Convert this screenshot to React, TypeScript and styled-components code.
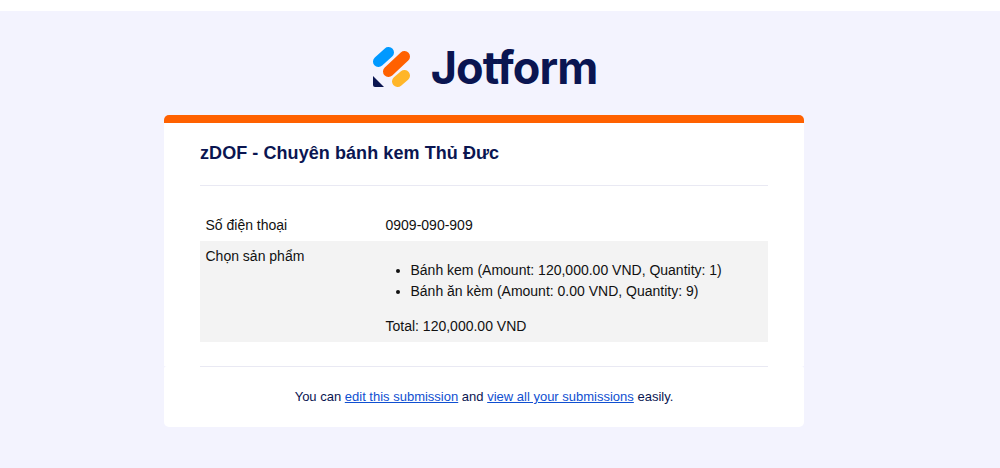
import React from 'react';
import styled, { createGlobalStyle } from 'styled-components';

const GlobalStyle = createGlobalStyle`
  html, body {
    margin: 0;
    padding: 0;
    background: #ffffff;
    font-family: "Liberation Sans", Arial, sans-serif;
  }
`;

const App: React.FC = () => {
  return (
    <>
      <GlobalStyle />
      <Page>
        <LogoRow>
          <LogoMark viewBox="0 0 38 40" aria-hidden="true">
            <line x1="5.5" y1="14.5" x2="15.5" y2="5.5" stroke="#0099ff" strokeWidth="11" strokeLinecap="round" />
            <line x1="15.5" y1="24.5" x2="31.5" y2="9.5" stroke="#ff6100" strokeWidth="11" strokeLinecap="round" />
            <line x1="24.5" y1="34.5" x2="31.5" y2="28.5" stroke="#ffb629" strokeWidth="11" strokeLinecap="round" />
            <path d="M0 29 L11 40 H2 A2 2 0 0 1 0 38 Z" fill="#0a1551" />
          </LogoMark>
          <Wordmark>Jotform</Wordmark>
        </LogoRow>
        <Card>
          <CardBody>
            <Header>
              <Title>zDOF - Chuyên bánh kem Thủ Đưc</Title>
            </Header>
            <Table>
              <Row>
                <Label>Số điện thoại</Label>
                <Value>0909-090-909</Value>
              </Row>
              <Row $shaded>
                <Label>Chọn sản phẩm</Label>
                <Value>
                  <Items>
                    <li>Bánh kem (Amount: 120,000.00 VND, Quantity: 1)</li>
                    <li>Bánh ăn kèm (Amount: 0.00 VND, Quantity: 9)</li>
                  </Items>
                  <Total>Total: 120,000.00 VND</Total>
                </Value>
              </Row>
            </Table>
          </CardBody>
          <Footer>
            <FooterText>
              You can <a href="#edit">edit this submission</a> and{' '}
              <a href="#all">view all your submissions</a> easily.
            </FooterText>
          </Footer>
        </Card>
      </Page>
    </>
  );
};

export default App;

const Page = styled.div`
  margin-top: 11px;
  height: 457px;
  box-sizing: border-box;
  padding-right: 32px;
  background: #f3f3fe;
  display: flex;
  flex-direction: column;
  align-items: center;
  overflow: hidden;
`;

const LogoRow = styled.div`
  height: 104px;
  display: flex;
  align-items: flex-start;
  gap: 20px;
  padding-top: 36px;
  padding-left: 2px;
  box-sizing: border-box;
`;

const LogoMark = styled.svg`
  width: 38px;
  height: 40px;
  display: block;
`;

const Wordmark = styled.span`
  font-family: Inter, "Liberation Sans", sans-serif;
  font-size: 45px;
  font-weight: 700;
  letter-spacing: -0.95px;
  line-height: 42px;
  color: #0a1551;
`;

const Card = styled.div`
  width: 640px;
  height: 312px;
  border-top: 8px solid #ff6100;
  border-radius: 5px;
  box-sizing: border-box;
`;

const CardBody = styled.div`
  background: #ffffff;
  padding: 0 36px;
  height: 243px;
  box-sizing: border-box;
`;

const Header = styled.div`
  height: 62px;
  border-bottom: 1px solid #e9e9f3;
  display: flex;
  align-items: center;
`;

const Title = styled.h1`
  margin: 0 0 2px;
  font-size: 18px;
  font-weight: 700;
  letter-spacing: 0.07px;
  color: #0a1551;
`;

const Table = styled.div`
  padding-top: 24px;
`;

const Row = styled.div<{ $shaded?: boolean }>`
  display: grid;
  grid-template-columns: 185.5px 1fr;
  background: ${(p) => (p.$shaded ? '#f3f3f3' : 'transparent')};
  font-size: 14px;
  line-height: 16px;
  color: #111111;
  padding: 7px 0 8px;
`;

const Label = styled.div`
  padding-left: 5.5px;
`;

const Value = styled.div``;

const Items = styled.ul`
  margin: 12px 0 16px;
  padding-left: 25px;
  line-height: 21px;
`;

const Total = styled.div``;

const Footer = styled.div`
  background: #ffffff;
  height: 61px;
  padding: 0 36px;
  box-sizing: border-box;
  border-radius: 3px 3px 5px 5px;
`;

const FooterText = styled.div`
  border-top: 1px solid #e9e9f3;
  padding-top: 22px;
  text-align: center;
  font-size: 13px;
  line-height: 16px;
  color: #0a1551;
  a {
    color: #0f4fd1;
  }
`;
